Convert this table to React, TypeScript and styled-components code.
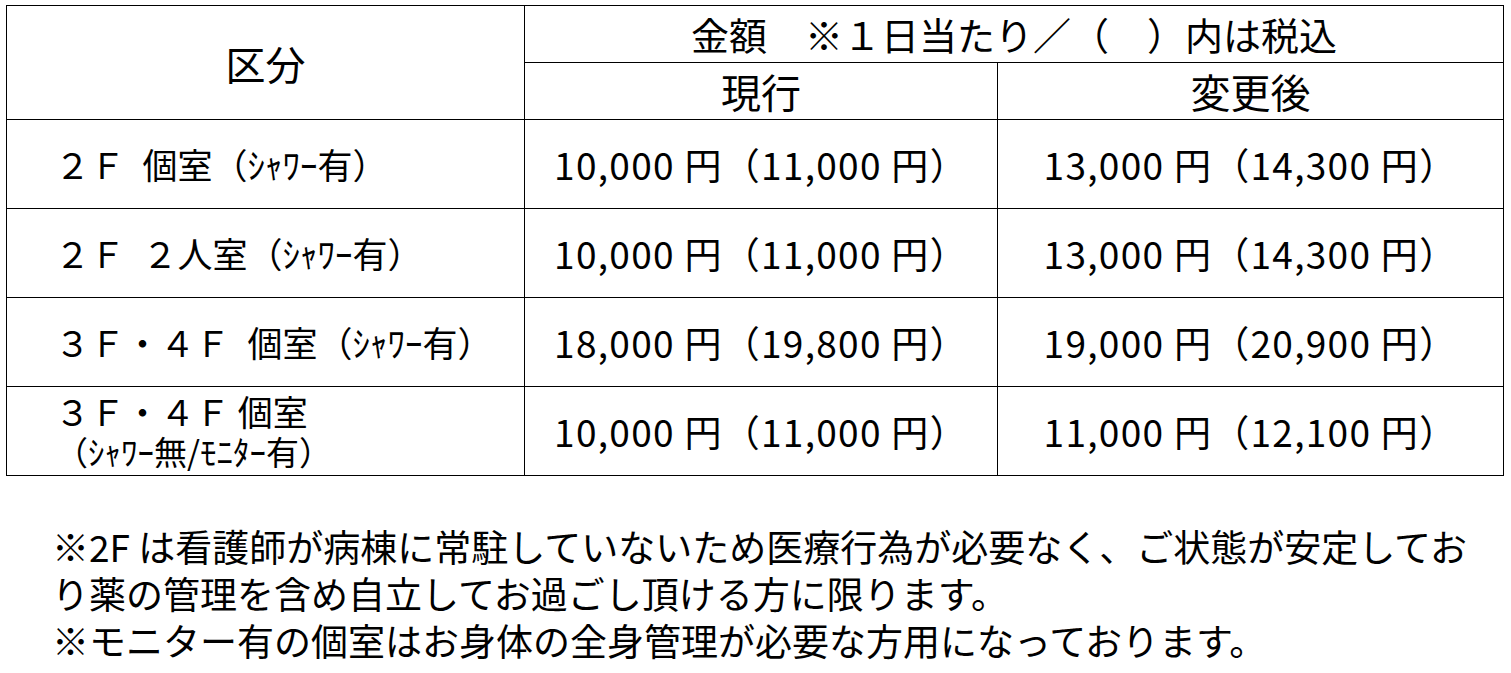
import React from "react";
import styled, { createGlobalStyle } from "styled-components";

const GlobalStyle = createGlobalStyle`
  html, body {
    margin: 0;
    padding: 0;
    background: #fff;
  }
  body {
    font-family: "Noto Sans CJK JP", "Noto Sans", sans-serif;
    color: #000;
  }
`;

type Row = {
  label: string;
  sub?: string;
  current: string;
  next: string;
};

const rows: Row[] = [
  {
    label: "２Ｆ\u2002個室（ｼｬﾜｰ有）",
    current: "10,000 円（11,000 円）",
    next: "13,000 円（14,300 円）",
  },
  {
    label: "２Ｆ\u2002２人室（ｼｬﾜｰ有）",
    current: "10,000 円（11,000 円）",
    next: "13,000 円（14,300 円）",
  },
  {
    label: "３Ｆ・４Ｆ\u2002個室（ｼｬﾜｰ有）",
    current: "18,000 円（19,800 円）",
    next: "19,000 円（20,900 円）",
  },
  {
    label: "３Ｆ・４Ｆ 個室",
    sub: "（ｼｬﾜｰ無/ﾓﾆﾀｰ有）",
    current: "10,000 円（11,000 円）",
    next: "11,000 円（12,100 円）",
  },
];

const App = () => (
  <Page>
    <GlobalStyle />
    <PriceTable>
      <colgroup>
        <col style={{ width: 518 }} />
        <col style={{ width: 473 }} />
        <col style={{ width: 506 }} />
      </colgroup>
      <thead>
        <tr>
          <HeadCell rowSpan={2} $big>
            区分
          </HeadCell>
          <HeadCell colSpan={2}>金額　※１日当たり／（　）内は税込</HeadCell>
        </tr>
        <tr>
          <HeadCell $big>現行</HeadCell>
          <HeadCell $big>変更後</HeadCell>
        </tr>
      </thead>
      <tbody>
        {rows.map((r, i) => (
          <tr key={i}>
            <LabelCell>
              <MainLabel>{r.label}</MainLabel>
              {r.sub && <SubLabel>{r.sub}</SubLabel>}
            </LabelCell>
            <PriceCell>{r.current}</PriceCell>
            <PriceCell>{r.next}</PriceCell>
          </tr>
        ))}
      </tbody>
    </PriceTable>
    <Notes>
      <p>
        ※2F は看護師が病棟に常駐していないため医療行為が必要なく、ご状態が安定してお
        <br />
        り薬の管理を含め自立してお過ごし頂ける方に限ります。
      </p>
      <p>※モニター有の個室はお身体の全身管理が必要な方用になっております。</p>
    </Notes>
  </Page>
);

export default App;

const Page = styled.div`
  padding: 5px 0 0 6px;
  width: 1511px;
  height: 673px;
  box-sizing: border-box;
  overflow: hidden;
`;

const PriceTable = styled.table`
  border-collapse: collapse;
  table-layout: fixed;
  width: 1497px;

  th,
  td {
    border: 1px solid #000;
    padding: 0;
  }

  thead tr {
    height: 57px;
  }

  tbody tr {
    height: 89px;
  }
`;

const HeadCell = styled.th<{ $big?: boolean }>`
  font-weight: normal;
  text-align: center;
  vertical-align: middle;
  font-size: ${(p) => (p.$big ? "40px" : "38px")};
  line-height: 1;
  white-space: nowrap;
`;

const LabelCell = styled.td`
  && {
    padding-left: 48px;
  }
  white-space: nowrap;
  vertical-align: middle;
`;

const MainLabel = styled.div`
  font-size: 35px;
  line-height: 40px;
`;

const SubLabel = styled.div`
  font-size: 33px;
  line-height: 40px;
`;

const PriceCell = styled.td`
  font-size: 37px;
  text-align: center;
  vertical-align: middle;
  white-space: nowrap;
  letter-spacing: 1.3px;
`;

const Notes = styled.div`
  margin: 47px 0 0 46px;
  font-size: 37px;
  line-height: 47px;

  p {
    margin: 0;
    white-space: nowrap;
  }
`;
